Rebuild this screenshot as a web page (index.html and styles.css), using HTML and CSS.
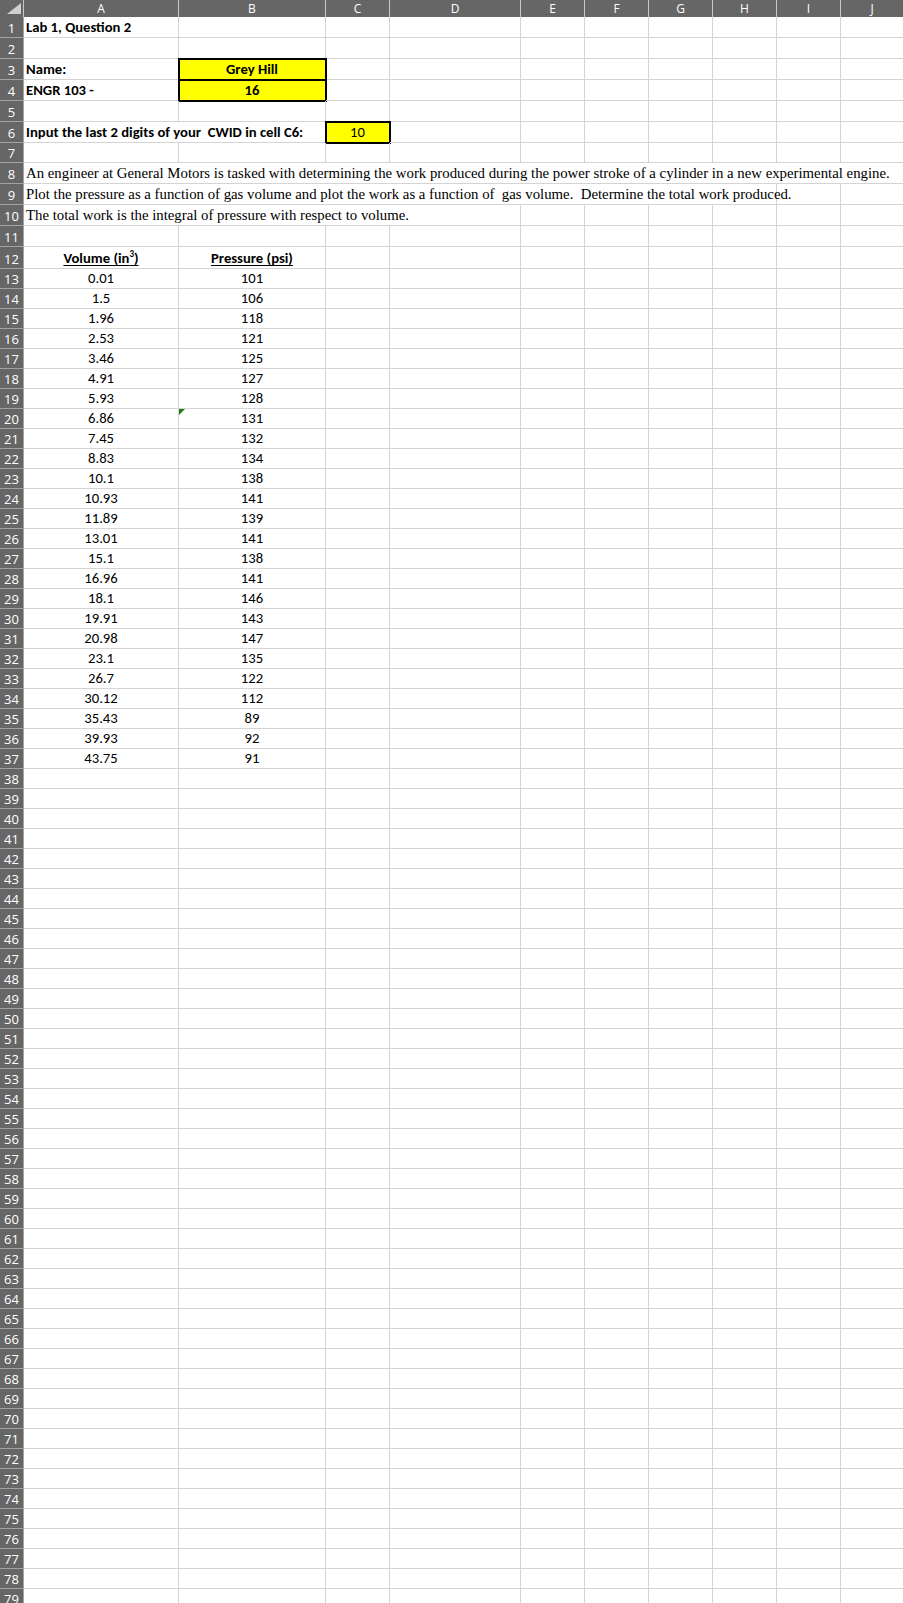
FILE: index.html
```html
<!DOCTYPE html>
<html>
<head>
<meta charset="utf-8">
<title>Lab 1, Question 2</title>
<link rel="stylesheet" href="styles.css">
</head>
<body>
<div class="sheet">
  <div class="row hdr">
    <div class="corner"><svg width="23" height="17" viewBox="0 0 23 17"><polygon points="7,14 21,14 21,3" fill="#d0d0d0"/></svg></div>
    <div>A</div><div>B</div><div>C</div><div>D</div><div>E</div><div>F</div><div>G</div><div>H</div><div>I</div><div>J</div>
  </div>
  <div class="row h21"><div class="rh">1</div><span class="b">Lab 1, Question 2</span><span></span><span></span><span></span><span></span><span></span><span></span><span></span><span></span><span></span></div>
  <div class="row h21"><div class="rh">2</div><span></span><span></span><span></span><span></span><span></span><span></span><span></span><span></span><span></span><span></span></div>
  <div class="row h21"><div class="rh">3</div><span class="b">Name:</span><span class="hl b">Grey Hill</span><span></span><span></span><span></span><span></span><span></span><span></span><span></span><span></span></div>
  <div class="row h21"><div class="rh">4</div><span class="b">ENGR 103 -</span><span class="hl b">16</span><span></span><span></span><span></span><span></span><span></span><span></span><span></span><span></span></div>
  <div class="row h21"><div class="rh">5</div><span></span><span></span><span></span><span></span><span></span><span></span><span></span><span></span><span></span><span></span></div>
  <div class="row h21"><div class="rh">6</div><span class="b s2">Input the last 2 digits of your  CWID in cell C6:</span><span class="hl">10</span><span></span><span></span><span></span><span></span><span></span><span></span><span></span></div>
  <div class="row h20"><div class="rh">7</div><span></span><span></span><span></span><span></span><span></span><span></span><span></span><span></span><span></span><span></span></div>
  <div class="row h21"><div class="rh">8</div><span class="serif s10">An engineer at General Motors is tasked with determining the work produced during the power stroke of a cylinder in a new experimental engine.</span></div>
  <div class="row h21"><div class="rh">9</div><span class="serif s8">Plot the pressure as a function of gas volume and plot the work as a function of  gas volume.  Determine the total work produced.</span><span></span><span></span></div>
  <div class="row h21"><div class="rh">10</div><span class="serif s4">The total work is the integral of pressure with respect to volume.</span><span></span><span></span><span></span><span></span><span></span><span></span></div>
  <div class="row h21"><div class="rh">11</div><span></span><span></span><span></span><span></span><span></span><span></span><span></span><span></span><span></span><span></span></div>
  <div class="row h22"><div class="rh">12</div><span class="c"><u>Volume (in<sup>3</sup>)</u></span><span class="c"><u>Pressure (psi)</u></span><span></span><span></span><span></span><span></span><span></span><span></span><span></span><span></span></div>
  <div class="row"><div class="rh">13</div><span class="c">0.01</span><span class="c">101</span><span></span><span></span><span></span><span></span><span></span><span></span><span></span><span></span></div>
  <div class="row"><div class="rh">14</div><span class="c">1.5</span><span class="c">106</span><span></span><span></span><span></span><span></span><span></span><span></span><span></span><span></span></div>
  <div class="row"><div class="rh">15</div><span class="c">1.96</span><span class="c">118</span><span></span><span></span><span></span><span></span><span></span><span></span><span></span><span></span></div>
  <div class="row"><div class="rh">16</div><span class="c">2.53</span><span class="c">121</span><span></span><span></span><span></span><span></span><span></span><span></span><span></span><span></span></div>
  <div class="row"><div class="rh">17</div><span class="c">3.46</span><span class="c">125</span><span></span><span></span><span></span><span></span><span></span><span></span><span></span><span></span></div>
  <div class="row"><div class="rh">18</div><span class="c">4.91</span><span class="c">127</span><span></span><span></span><span></span><span></span><span></span><span></span><span></span><span></span></div>
  <div class="row"><div class="rh">19</div><span class="c">5.93</span><span class="c">128</span><span></span><span></span><span></span><span></span><span></span><span></span><span></span><span></span></div>
  <div class="row"><div class="rh">20</div><span class="c">6.86</span><span class="c tri">131</span><span></span><span></span><span></span><span></span><span></span><span></span><span></span><span></span></div>
  <div class="row"><div class="rh">21</div><span class="c">7.45</span><span class="c">132</span><span></span><span></span><span></span><span></span><span></span><span></span><span></span><span></span></div>
  <div class="row"><div class="rh">22</div><span class="c">8.83</span><span class="c">134</span><span></span><span></span><span></span><span></span><span></span><span></span><span></span><span></span></div>
  <div class="row"><div class="rh">23</div><span class="c">10.1</span><span class="c">138</span><span></span><span></span><span></span><span></span><span></span><span></span><span></span><span></span></div>
  <div class="row"><div class="rh">24</div><span class="c">10.93</span><span class="c">141</span><span></span><span></span><span></span><span></span><span></span><span></span><span></span><span></span></div>
  <div class="row"><div class="rh">25</div><span class="c">11.89</span><span class="c">139</span><span></span><span></span><span></span><span></span><span></span><span></span><span></span><span></span></div>
  <div class="row"><div class="rh">26</div><span class="c">13.01</span><span class="c">141</span><span></span><span></span><span></span><span></span><span></span><span></span><span></span><span></span></div>
  <div class="row"><div class="rh">27</div><span class="c">15.1</span><span class="c">138</span><span></span><span></span><span></span><span></span><span></span><span></span><span></span><span></span></div>
  <div class="row"><div class="rh">28</div><span class="c">16.96</span><span class="c">141</span><span></span><span></span><span></span><span></span><span></span><span></span><span></span><span></span></div>
  <div class="row"><div class="rh">29</div><span class="c">18.1</span><span class="c">146</span><span></span><span></span><span></span><span></span><span></span><span></span><span></span><span></span></div>
  <div class="row"><div class="rh">30</div><span class="c">19.91</span><span class="c">143</span><span></span><span></span><span></span><span></span><span></span><span></span><span></span><span></span></div>
  <div class="row"><div class="rh">31</div><span class="c">20.98</span><span class="c">147</span><span></span><span></span><span></span><span></span><span></span><span></span><span></span><span></span></div>
  <div class="row"><div class="rh">32</div><span class="c">23.1</span><span class="c">135</span><span></span><span></span><span></span><span></span><span></span><span></span><span></span><span></span></div>
  <div class="row"><div class="rh">33</div><span class="c">26.7</span><span class="c">122</span><span></span><span></span><span></span><span></span><span></span><span></span><span></span><span></span></div>
  <div class="row"><div class="rh">34</div><span class="c">30.12</span><span class="c">112</span><span></span><span></span><span></span><span></span><span></span><span></span><span></span><span></span></div>
  <div class="row"><div class="rh">35</div><span class="c">35.43</span><span class="c">89</span><span></span><span></span><span></span><span></span><span></span><span></span><span></span><span></span></div>
  <div class="row"><div class="rh">36</div><span class="c">39.93</span><span class="c">92</span><span></span><span></span><span></span><span></span><span></span><span></span><span></span><span></span></div>
  <div class="row"><div class="rh">37</div><span class="c">43.75</span><span class="c">91</span><span></span><span></span><span></span><span></span><span></span><span></span><span></span><span></span></div>
  <div class="row"><div class="rh">38</div><span></span><span></span><span></span><span></span><span></span><span></span><span></span><span></span><span></span><span></span></div>
  <div class="row"><div class="rh">39</div><span></span><span></span><span></span><span></span><span></span><span></span><span></span><span></span><span></span><span></span></div>
  <div class="row"><div class="rh">40</div><span></span><span></span><span></span><span></span><span></span><span></span><span></span><span></span><span></span><span></span></div>
  <div class="row"><div class="rh">41</div><span></span><span></span><span></span><span></span><span></span><span></span><span></span><span></span><span></span><span></span></div>
  <div class="row"><div class="rh">42</div><span></span><span></span><span></span><span></span><span></span><span></span><span></span><span></span><span></span><span></span></div>
  <div class="row"><div class="rh">43</div><span></span><span></span><span></span><span></span><span></span><span></span><span></span><span></span><span></span><span></span></div>
  <div class="row"><div class="rh">44</div><span></span><span></span><span></span><span></span><span></span><span></span><span></span><span></span><span></span><span></span></div>
  <div class="row"><div class="rh">45</div><span></span><span></span><span></span><span></span><span></span><span></span><span></span><span></span><span></span><span></span></div>
  <div class="row"><div class="rh">46</div><span></span><span></span><span></span><span></span><span></span><span></span><span></span><span></span><span></span><span></span></div>
  <div class="row"><div class="rh">47</div><span></span><span></span><span></span><span></span><span></span><span></span><span></span><span></span><span></span><span></span></div>
  <div class="row"><div class="rh">48</div><span></span><span></span><span></span><span></span><span></span><span></span><span></span><span></span><span></span><span></span></div>
  <div class="row"><div class="rh">49</div><span></span><span></span><span></span><span></span><span></span><span></span><span></span><span></span><span></span><span></span></div>
  <div class="row"><div class="rh">50</div><span></span><span></span><span></span><span></span><span></span><span></span><span></span><span></span><span></span><span></span></div>
  <div class="row"><div class="rh">51</div><span></span><span></span><span></span><span></span><span></span><span></span><span></span><span></span><span></span><span></span></div>
  <div class="row"><div class="rh">52</div><span></span><span></span><span></span><span></span><span></span><span></span><span></span><span></span><span></span><span></span></div>
  <div class="row"><div class="rh">53</div><span></span><span></span><span></span><span></span><span></span><span></span><span></span><span></span><span></span><span></span></div>
  <div class="row"><div class="rh">54</div><span></span><span></span><span></span><span></span><span></span><span></span><span></span><span></span><span></span><span></span></div>
  <div class="row"><div class="rh">55</div><span></span><span></span><span></span><span></span><span></span><span></span><span></span><span></span><span></span><span></span></div>
  <div class="row"><div class="rh">56</div><span></span><span></span><span></span><span></span><span></span><span></span><span></span><span></span><span></span><span></span></div>
  <div class="row"><div class="rh">57</div><span></span><span></span><span></span><span></span><span></span><span></span><span></span><span></span><span></span><span></span></div>
  <div class="row"><div class="rh">58</div><span></span><span></span><span></span><span></span><span></span><span></span><span></span><span></span><span></span><span></span></div>
  <div class="row"><div class="rh">59</div><span></span><span></span><span></span><span></span><span></span><span></span><span></span><span></span><span></span><span></span></div>
  <div class="row"><div class="rh">60</div><span></span><span></span><span></span><span></span><span></span><span></span><span></span><span></span><span></span><span></span></div>
  <div class="row"><div class="rh">61</div><span></span><span></span><span></span><span></span><span></span><span></span><span></span><span></span><span></span><span></span></div>
  <div class="row"><div class="rh">62</div><span></span><span></span><span></span><span></span><span></span><span></span><span></span><span></span><span></span><span></span></div>
  <div class="row"><div class="rh">63</div><span></span><span></span><span></span><span></span><span></span><span></span><span></span><span></span><span></span><span></span></div>
  <div class="row"><div class="rh">64</div><span></span><span></span><span></span><span></span><span></span><span></span><span></span><span></span><span></span><span></span></div>
  <div class="row"><div class="rh">65</div><span></span><span></span><span></span><span></span><span></span><span></span><span></span><span></span><span></span><span></span></div>
  <div class="row"><div class="rh">66</div><span></span><span></span><span></span><span></span><span></span><span></span><span></span><span></span><span></span><span></span></div>
  <div class="row"><div class="rh">67</div><span></span><span></span><span></span><span></span><span></span><span></span><span></span><span></span><span></span><span></span></div>
  <div class="row"><div class="rh">68</div><span></span><span></span><span></span><span></span><span></span><span></span><span></span><span></span><span></span><span></span></div>
  <div class="row"><div class="rh">69</div><span></span><span></span><span></span><span></span><span></span><span></span><span></span><span></span><span></span><span></span></div>
  <div class="row"><div class="rh">70</div><span></span><span></span><span></span><span></span><span></span><span></span><span></span><span></span><span></span><span></span></div>
  <div class="row"><div class="rh">71</div><span></span><span></span><span></span><span></span><span></span><span></span><span></span><span></span><span></span><span></span></div>
  <div class="row"><div class="rh">72</div><span></span><span></span><span></span><span></span><span></span><span></span><span></span><span></span><span></span><span></span></div>
  <div class="row"><div class="rh">73</div><span></span><span></span><span></span><span></span><span></span><span></span><span></span><span></span><span></span><span></span></div>
  <div class="row"><div class="rh">74</div><span></span><span></span><span></span><span></span><span></span><span></span><span></span><span></span><span></span><span></span></div>
  <div class="row"><div class="rh">75</div><span></span><span></span><span></span><span></span><span></span><span></span><span></span><span></span><span></span><span></span></div>
  <div class="row"><div class="rh">76</div><span></span><span></span><span></span><span></span><span></span><span></span><span></span><span></span><span></span><span></span></div>
  <div class="row"><div class="rh">77</div><span></span><span></span><span></span><span></span><span></span><span></span><span></span><span></span><span></span><span></span></div>
  <div class="row"><div class="rh">78</div><span></span><span></span><span></span><span></span><span></span><span></span><span></span><span></span><span></span><span></span></div>
  <div class="row"><div class="rh">79</div><span></span><span></span><span></span><span></span><span></span><span></span><span></span><span></span><span></span><span></span></div>
</div>
</body>
</html>
```
FILE: styles.css
```css
* { box-sizing: border-box; }
html, body { margin: 0; padding: 0; overflow: hidden; background: #fff; }

.sheet {
  width: 904px;
  font-family: Carlito, Calibri, Lato, sans-serif;
  font-size: 14.67px;
  color: #000;
}

.row {
  display: grid;
  grid-template-columns: 24px 155px 147px 64px 131px 64px 64px 64px 64px 64px 63px;
  height: 20px;
}
.h20 { height: 20px; }
.h21 { height: 21px; }
.h22 { height: 22px; }

.row > span {
  display: flex;
  align-items: flex-end;
  min-width: 0;
  border-right: 1px solid #d4d4d4;
  border-bottom: 1px solid #d4d4d4;
  padding: 0 2px 2px 2px;
  line-height: 1;
  white-space: pre;
}

.b { font-weight: bold; }
.c { justify-content: center; }
.s2 { grid-column: span 2; }
.s4 { grid-column: span 4; }
.s8 { grid-column: span 8; }
.s10 { grid-column: span 10; }

.serif {
  font-family: "Liberation Serif", "Times New Roman", serif;
  font-size: 14.8px;
}

.row > span.hl {
  background: #ffff00;
  outline: 2px solid #000;
  outline-offset: -1px;
  justify-content: center;
}

u {
  font-weight: bold;
  text-decoration: underline;
  text-underline-offset: 2px;
  text-decoration-thickness: 1px;
}
sup {
  font-size: 9px;
  vertical-align: 6px;
  line-height: 0;
}

.row > span.tri { position: relative; }
.tri::before {
  content: "";
  position: absolute;
  left: 0;
  top: 0;
  border-style: solid;
  border-width: 6px 6px 0 0;
  border-color: #1b7d1b transparent transparent transparent;
}

.rh {
  display: flex;
  align-items: flex-end;
  justify-content: center;
  background: #666666;
  color: #ffffff;
  font-family: "Open Sans", "Noto Sans", sans-serif;
  font-size: 13px;
  line-height: 1;
  padding-bottom: 2px;
  border-bottom: 1px solid #a3a3a3;
  border-right: 1px solid #a3a3a3;
}

.hdr { height: 17px; }
.hdr > div {
  display: flex;
  align-items: center;
  justify-content: center;
  background: #666666;
  color: #ffffff;
  font-family: "Open Sans", "Noto Sans", sans-serif;
  font-size: 12px;
  line-height: 1;
  border-right: 1px solid #c8c8c8;
}
.hdr > .corner { display: block; border-right: 1px solid #c8c8c8; }
.corner svg { display: block; }
```
